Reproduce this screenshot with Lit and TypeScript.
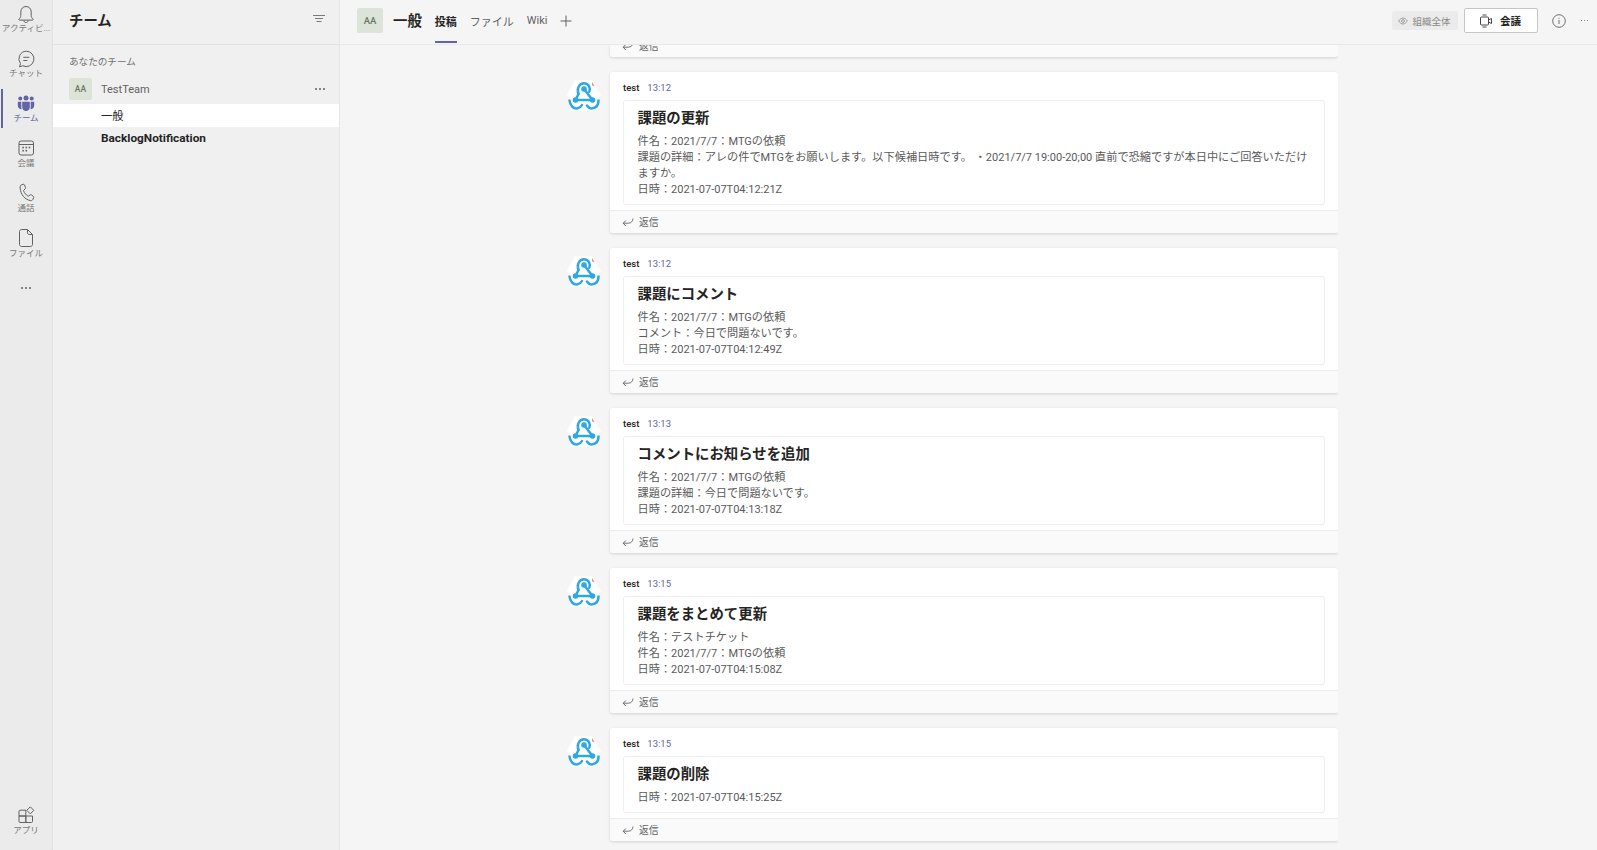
import { LitElement, html, css, svg } from 'lit';
import { customElement, property } from 'lit/decorators.js';

interface Post {
  time: string;
  title: string;
  lines: string[];
}

const POSTS: Post[] = [
  {
    time: '13:12',
    title: '課題の更新',
    lines: [
      '件名：2021/7/7：MTGの依頼',
      '課題の詳細：アレの件でMTGをお願いします。以下候補日時です。 ・2021/7/7 19:00-20;00 直前で恐縮ですが本日中にご回答いただけ',
      'ますか。',
      '日時：2021-07-07T04:12:21Z',
    ],
  },
  {
    time: '13:12',
    title: '課題にコメント',
    lines: ['件名：2021/7/7：MTGの依頼', 'コメント：今日で問題ないです。', '日時：2021-07-07T04:12:49Z'],
  },
  {
    time: '13:13',
    title: 'コメントにお知らせを追加',
    lines: ['件名：2021/7/7：MTGの依頼', '課題の詳細：今日で問題ないです。', '日時：2021-07-07T04:13:18Z'],
  },
  {
    time: '13:15',
    title: '課題をまとめて更新',
    lines: ['件名：テストチケット', '件名：2021/7/7：MTGの依頼', '日時：2021-07-07T04:15:08Z'],
  },
  {
    time: '13:15',
    title: '課題の削除',
    lines: ['日時：2021-07-07T04:15:25Z'],
  },
];

const ICONS: Record<string, unknown> = {
  bell: svg`<g transform="translate(0 2)"><path d="M10 1.500c-3.200 0-5.200 2.400-5.200 5.400v3.600c0 1.500-.8 2.600-1.800 3.600-.4.400-.2 1 .4 1h13.200c.6 0 .8-.6.4-1-1-1-1.800-2.100-1.800-3.600V6.900c0-3-2-5.400-5.200-5.400z"/><path d="M8 15.500c0 1.300.9 2.200 2 2.200s2-.9 2-2.200"/></g>`,
  chat: svg`<g transform="translate(0 1)"><path d="M10.300 2.200a7.700 7.700 0 1 1-3.500 14.600l-3.300 1 1-3.200a7.700 7.700 0 0 1 5.800-12.400z"/><path d="M7.300 8.300h6M7.300 11.500h4"/></g>`,
  team: svg`<g fill="#6264a7" stroke="none"><circle cx="10" cy="5" r="2.500"/><circle cx="4.300" cy="5.600" r="2"/><circle cx="15.700" cy="5.600" r="2"/><path d="M6.200 8.800h7.600v5.200c0 2.400-1.700 4-3.800 4s-3.800-1.600-3.800-4z"/><path d="M1.800 8.800h3.500v5.400c0 .8.100 1.500.4 2.100-2.200 0-3.900-1.400-3.900-3.800z"/><path d="M18.200 8.800h-3.500v5.400c0 .8-.1 1.500-.4 2.100 2.200 0 3.900-1.400 3.900-3.800z"/></g>`,
  calendar: svg`<rect x="3" y="3" width="14.500" height="14" rx="2"/><path d="M3 6.500h14.500"/><g fill="currentColor" stroke="none"><rect x="6.300" y="8.700" width="1.600" height="1.600"/><rect x="9.500" y="8.700" width="1.600" height="1.600"/><rect x="12.700" y="8.700" width="1.600" height="1.600"/><rect x="6.300" y="11.900" width="1.600" height="1.600"/><rect x="9.500" y="11.900" width="1.600" height="1.600"/></g>`,
  phone: svg`<path d="M5.500 1.800 7.400 1.300c.5-.1.9.1 1.100.6l1 2.700c.2.400 0 .9-.3 1.200L7.900 7c-.3.300-.4.700-.2 1.100.9 2.100 2.200 3.700 4.100 4.900.3.200.7.200 1-.1l1.300-1c.4-.3.9-.3 1.300 0l2 1.500c.4.300.5.800.3 1.200l-.9 1.900c-.4.900-1.300 1.300-2.300 1.100C8.700 16.500 4.800 11.700 4.100 5c-.1-1.500.3-2.800 1.400-3.200z"/>`,
  file: svg`<path d="M5.500 1.500h6l5 5v10c0 1.100-.8 2-1.900 2H5.500c-1.100 0-2-.9-2-2v-13c0-1.100.9-2 2-2z"/><path d="M11.500 1.500v3.300c0 1 .7 1.700 1.700 1.700h3.300"/>`,
  apps: svg`<path d="M3 6.200c0-.6.400-1 1-1h5.800v5.800H3z"/><path d="M3 11h6.800v6.500H4c-.6 0-1-.4-1-1z"/><path d="M9.800 11h6.700v5.500c0 .6-.4 1-1 1H9.800z"/><path d="m14.300 1.800 3.500 3.500-3.500 3.600-3.500-3.600z"/>`,
};

// latin runs sit a bit smaller than the kana around them, like the original font pair
const runs = (text: string) =>
  text.split(/([\x21-\x7e]+(?: [\x21-\x7e]+)*)/).map((part, i) => (i % 2 ? html`<span class="latin">${part}</span>` : part));

@customElement('reply-bar')
export class ReplyBar extends LitElement {
  static styles = css`
    :host {
      display: flex;
      align-items: center;
      gap: 5px;
      height: 23px;
      box-sizing: border-box;
      padding-left: 12px;
      background: #fafafa;
      border-top: 1px solid #ececec;
      border-radius: 0 0 3px 3px;
      font-size: 9.8px;
      color: #616161;
      font-family: Roboto, "Noto Sans CJK JP", sans-serif;
    }

    svg {
      display: block;
    }
  `;

  render() {
    return html`
      <svg width="12" height="12" viewBox="0 0 12 12" fill="none" stroke="#616161" stroke-width="0.9">
        <path d="M11 2.500c0 2.600-2 4.700-4.500 4.700H1.200M3.800 4.500 1.200 7.200l2.600 2.800" />
      </svg>
      返信
    `;
  }
}

@customElement('webhook-mark')
export class WebhookMark extends LitElement {
  static styles = css`
    :host {
      display: block;
      width: 34px;
      height: 31px;
    }
  `;

  render() {
    return html`
      <svg width="34" height="31" viewBox="0 0 34 31" fill="none">
        <path d="M8 0h17l9 15-8 16H8L0 15z" fill="#fff" />
        <path d="M25 2l2.500 4-2.500-.5z" fill="#f0866e" />
        <g stroke="#2da9e0" stroke-width="2.500" stroke-linecap="round">
          <path d="M11.500 14C9.500 9 12 3.200 17 3.200c4.600 0 7 4.800 5.200 8.600" />
          <path d="M17 9 25.500 20M11.500 14 8.500 20M8.500 20h17" />
          <path d="M2.500 20.500C3 25.500 6.500 29 10.500 28.300c2-.4 3.500-1.500 4.500-3.300" />
          <path d="M20 25.500c1.300 2 3.300 3.200 5.500 2.800 3.800-.6 6-3.800 6-7.800" />
        </g>
        <g fill="#2da9e0"><circle cx="17" cy="9" r="2.800" /><circle cx="8.500" cy="20" r="2.800" /><circle cx="25.500" cy="20" r="2.800" /></g>
      </svg>
    `;
  }
}

@customElement('post-card')
export class PostCard extends LitElement {
  @property({ type: Object }) post!: Post;

  static styles = css`
    :host {
      display: flex;
      font-family: Roboto, "Noto Sans CJK JP", sans-serif;
    }

    .avatar {
      width: 43px;
      flex: none;
      padding-top: 8px;
    }

    .card {
      flex: 1;
      min-width: 0;
      background: #fff;
      border-radius: 3px;
      box-shadow: 0 1px 3px rgba(0, 0, 0, 0.14);
    }

    .head {
      height: 28px;
      box-sizing: border-box;
      padding: 2px 0 0 13px;
      display: flex;
      align-items: center;
      gap: 8px;
      font-size: 9.5px;
      color: #252423;
    }

    .head b {
      font-weight: 500;
    }

    .head span {
      color: #6264a7;
    }

    .body {
      margin: 0 13px 5px;
      padding: 8px 14px 6px 13.5px;
      border: 1px solid #eeeeee;
      border-radius: 3px;
      color: #5a5a5a;
      font-size: 11.2px;
      line-height: 16px;
    }

    .latin {
      font-size: 11px;
      line-height: 1;
    }

    .title {
      height: 20px;
      line-height: 20px;
      margin-bottom: 5px;
      font-size: 14.4px;
      font-weight: 700;
      color: #252423;
    }
  `;

  render() {
    const { post } = this;
    return html`
      <div class="avatar"><webhook-mark></webhook-mark></div>
      <div class="card">
        <div class="head"><b>test</b><span>${post.time}</span></div>
        <div class="body">
          <div class="title">${post.title}</div>
          ${post.lines.map((l) => html`<div>${runs(l)}</div>`)}
        </div>
        <reply-bar></reply-bar>
      </div>
    `;
  }
}

@customElement('app-root')
export class AppRoot extends LitElement {
  static styles = css`
    :host {
      display: flex;
      height: 850px;
      overflow: hidden;
      background: #f5f5f5;
      color: #252423;
      font-family: Roboto, "Noto Sans CJK JP", sans-serif;
    }

    svg {
      display: block;
    }

    /* left app bar */
    .rail {
      width: 53px;
      flex: none;
      display: flex;
      flex-direction: column;
      justify-content: space-between;
      background: #ebebeb;
      box-shadow: inset -2px 0 2px -1px rgba(0, 0, 0, 0.05);
      overflow: hidden;
      color: #616161;
    }

    .rail-list {
      margin-top: -9px;
    }

    .rail-item {
      position: relative;
      height: 45px;
      box-sizing: border-box;
      padding: 12px 1px 0 0;
      display: flex;
      flex-direction: column;
      align-items: center;
      font-size: 8.5px;
      line-height: 11px;
      white-space: nowrap;
      color: #7a7a7a;
    }

    .rail-item svg {
      color: #616161;
    }

    .rail-item.active {
      color: #6264a7;
    }

    .rail-item.active::before {
      content: '';
      position: absolute;
      left: 1px;
      top: 8px;
      width: 2px;
      height: 39px;
      background: #6264a7;
    }

    .rail-dots {
      height: 20px;
      padding-right: 1px;
      display: flex;
      align-items: center;
      justify-content: center;
      gap: 2px;
      margin-top: 17px;
    }

    .dot {
      width: 2px;
      height: 2px;
      border-radius: 50%;
      background: #616161;
    }

    .rail-apps {
      height: 44px;
      margin-bottom: 1px;
      padding-top: 0;
    }

    /* team list */
    .side {
      width: 287px;
      flex: none;
      background: #f0f0f0;
      border-right: 1px solid #e6e6e6;
      box-sizing: border-box;
    }

    .side-head {
      height: 45px;
      box-sizing: border-box;
      display: flex;
      align-items: center;
      justify-content: space-between;
      padding: 0 14px 6px 16px;
      border-bottom: 1px solid #e1e1e1;
      font-size: 14.4px;
      font-weight: 700;
    }

    .side-label {
      padding: 10px 0 0 16px;
      height: 32px;
      box-sizing: border-box;
      font-size: 9.6px;
      line-height: 14px;
      color: #717070;
    }

    .team-row {
      height: 27px;
      padding: 0 14px 3px 16px;
      box-sizing: border-box;
      display: flex;
      align-items: center;
      font-size: 11px;
      color: #616161;
    }

    .team-row .tile {
      width: 23px;
      height: 22px;
      margin-right: 9px;
      font-size: 8.5px;
    }

    .team-row .more {
      margin-left: auto;
      display: flex;
      gap: 2px;
    }

    .channel {
      height: 23px;
      line-height: 23px;
      padding-left: 48px;
      font-size: 11.2px;
    }

    .channel.current {
      background: #fff;
      line-height: 25px;
    }

    .channel.unread {
      font-size: 11.8px;
      font-weight: 700;
    }

    .tile {
      display: flex;
      align-items: center;
      justify-content: center;
      flex: none;
      border-radius: 2px;
      background: #dce3d8;
      color: #6c7864;
      font-weight: 500;
    }

    /* channel area */
    .main {
      flex: 1;
      min-width: 0;
      display: flex;
      flex-direction: column;
    }

    .bar {
      height: 45px;
      flex: none;
      box-sizing: border-box;
      display: flex;
      align-items: center;
      padding: 0 7px 3px 17px;
      border-bottom: 1px solid #e8e8e8;
      position: relative;
      z-index: 1;
      background: #f5f5f5;
    }

    .bar .tile {
      width: 26px;
      height: 25px;
      margin-right: 10px;
      font-size: 9.5px;
    }

    .bar h1 {
      margin: -2px 13px 0 0;
      font-size: 14.4px;
      font-weight: 700;
    }

    .tab {
      font-size: 11px;
      color: #616161;
      margin-right: 13px;
      position: relative;
    }

    .tab.active {
      color: #252423;
      font-weight: 700;
    }

    .tab.active::after {
      content: '';
      position: absolute;
      left: 0;
      right: 0;
      bottom: -14px;
      height: 2px;
      background: #6264a7;
    }

    .spacer {
      flex: 1;
    }

    .scope {
      height: 19px;
      width: 66px;
      margin-right: 6px;
      display: flex;
      align-items: center;
      justify-content: center;
      gap: 4px;
      background: #ebebeb;
      border-radius: 2px;
      font-size: 9.5px;
      color: #8a8886;
    }

    .meet {
      width: 74px;
      height: 25px;
      box-sizing: border-box;
      display: flex;
      align-items: center;
      justify-content: center;
      gap: 8px;
      background: #fff;
      border: 1px solid #c8c6c4;
      border-radius: 2px;
      font-size: 10.5px;
      font-weight: 700;
      margin-right: 14px;
    }

    .info {
      margin-right: 15px;
    }

    .bar-more {
      display: flex;
      gap: 1.5px;
      margin-right: 2px;
    }

    .bar-more .dot {
      width: 1.5px;
      height: 1.5px;
    }

    .feed {
      flex: 1;
      overflow: hidden;
      box-sizing: border-box;
      padding: 0 0 0 227px;
      width: 998px;
      display: flex;
      flex-direction: column;
      gap: 15px;
    }

    .cut {
      flex: none;
      height: 12px;
      margin-left: 43px;
      display: flex;
      flex-direction: column;
      justify-content: flex-end;
      overflow: hidden;
      background: #fff;
      border-radius: 0 0 3px 3px;
      box-shadow: 0 1px 3px rgba(0, 0, 0, 0.14);
    }

    .cut reply-bar {
      flex: none;
      border-top: 0;
    }

    post-card {
      flex: none;
    }
  `;

  private icon(name: string) {
    return html`<svg width="20" height="20" viewBox="0 0 20 20" fill="none" stroke="currentColor" stroke-width="1">${ICONS[name]}</svg>`;
  }

  private railItem(name: string, label: string, active = false) {
    return html`
      <div class="rail-item ${active ? 'active' : ''}">
        ${this.icon(name)}
        <span>${label}</span>
      </div>
    `;
  }

  private dots() {
    return html`<span class="dot"></span><span class="dot"></span><span class="dot"></span>`;
  }

  render() {
    return html`
      <nav class="rail">
        <div class="rail-list">
          ${this.railItem('bell', 'アクティビ...')}
          ${this.railItem('chat', 'チャット')}
          ${this.railItem('team', 'チーム', true)}
          ${this.railItem('calendar', '会議')}
          ${this.railItem('phone', '通話')}
          ${this.railItem('file', 'ファイル')}
          <div class="rail-dots">${this.dots()}</div>
        </div>
        <div class="rail-item rail-apps">${this.icon('apps')}<span>アプリ</span></div>
      </nav>

      <aside class="side">
        <div class="side-head">
          <span>チーム</span>
          <svg width="12" height="10" viewBox="0 0 12 10" fill="none" stroke="#7a7a7a" stroke-width="1">
            <path d="M0 1.500h12M2 4.500h8M3.500 7.500h5" />
          </svg>
        </div>
        <div class="side-label">あなたのチーム</div>
        <div class="team-row">
          <span class="tile">AA</span>
          TestTeam
          <span class="more">${this.dots()}</span>
        </div>
        <div class="channel current">一般</div>
        <div class="channel unread">BacklogNotification</div>
      </aside>

      <section class="main">
        <header class="bar">
          <span class="tile">AA</span>
          <h1>一般</h1>
          <span class="tab active">投稿</span>
          <span class="tab">ファイル</span>
          <span class="tab">Wiki</span>
          <svg width="12" height="12" viewBox="0 0 12 12" fill="none" stroke="#616161" stroke-width="1">
            <path d="M6 .5v11M.5 6h11" />
          </svg>
          <span class="spacer"></span>
          <div class="scope">
            <svg width="10" height="8" viewBox="0 0 10 8" fill="none" stroke="#8a8886" stroke-width="0.8">
              <path d="M.6 4C2 2 3.400 1 5 1s3 1 4.400 3C8 6 6.600 7 5 7S2 6 .6 4z" /><circle cx="5" cy="4" r="1.4" />
            </svg>
            組織全体
          </div>
          <div class="meet">
            <svg width="12" height="14" viewBox="0 0 12 14" fill="none" stroke="#484644" stroke-width="1">
              <rect x=".5" y="3" width="8" height="8" rx="1" /><path d="m8.500 6 3-1.500v5l-3-1.500M2.500 1h4M2.500 13h4" />
            </svg>
            会議
          </div>
          <svg class="info" width="14" height="14" viewBox="0 0 14 14" fill="none" stroke="#616161" stroke-width="0.9">
            <circle cx="7" cy="7" r="6.3" /><path d="M7 6v4M7 3.800v1" />
          </svg>
          <span class="bar-more">${this.dots()}</span>
        </header>
        <div class="feed">
          <div class="cut"><reply-bar></reply-bar></div>
          ${POSTS.map((p) => html`<post-card .post=${p}></post-card>`)}
        </div>
      </section>
    `;
  }
}
